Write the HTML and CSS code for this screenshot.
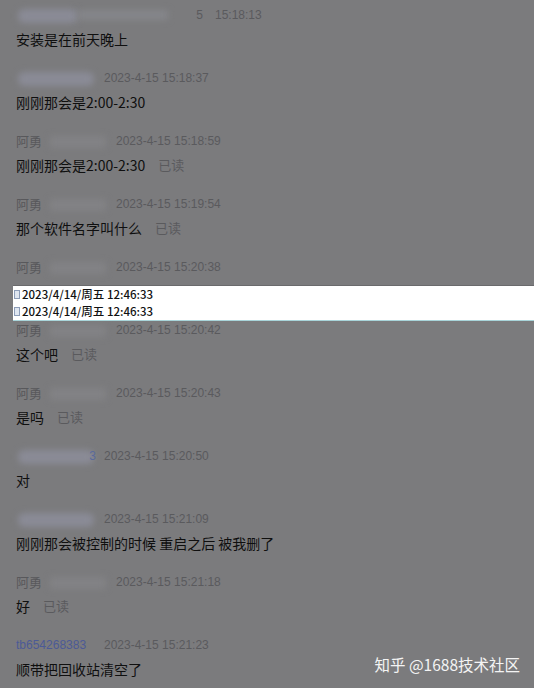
FILE: index.html
```html
<!DOCTYPE html>
<html lang="zh-CN">
<head>
<meta charset="utf-8">
<link rel="stylesheet" href="styles.css">
</head>
<body>
<div class="chat">
  <div class="msg">
    <div class="head"><span class="name smudge s-wide"><i class="blur b1"></i><i class="blur b2"></i><span class="tail">5</span></span><span class="time">15:18:13</span></div>
    <div class="body">安装是在前天晚上</div>
  </div>
  <div class="msg">
    <div class="head"><span class="name smudge"><i class="blur b1"></i></span><span class="time">2023-4-15 15:18:37</span></div>
    <div class="body">刚刚那会是2:00-2:30</div>
  </div>
  <div class="msg">
    <div class="head"><span class="name ayong">阿勇<i class="blur b3"></i></span><span class="time">2023-4-15 15:18:59</span></div>
    <div class="body">刚刚那会是2:00-2:30<span class="read">已读</span></div>
  </div>
  <div class="msg">
    <div class="head"><span class="name ayong">阿勇<i class="blur b3"></i></span><span class="time">2023-4-15 15:19:54</span></div>
    <div class="body">那个软件名字叫什么<span class="read">已读</span></div>
  </div>
  <div class="msg msg-band">
    <div class="head"><span class="name ayong">阿勇<i class="blur b3"></i></span><span class="time">2023-4-15 15:20:38</span></div>
    <div class="band">
      <div class="band-line"><span class="ico"></span>2023/4/14/周五 12:46:33</div>
      <div class="band-line"><span class="ico"></span>2023/4/14/周五 12:46:33</div>
    </div>
  </div>
  <div class="msg">
    <div class="head"><span class="name ayong">阿勇<i class="blur b3"></i></span><span class="time">2023-4-15 15:20:42</span></div>
    <div class="body">这个吧<span class="read">已读</span></div>
  </div>
  <div class="msg">
    <div class="head"><span class="name ayong">阿勇<i class="blur b3"></i></span><span class="time">2023-4-15 15:20:43</span></div>
    <div class="body">是吗<span class="read">已读</span></div>
  </div>
  <div class="msg">
    <div class="head"><span class="name smudge blue"><i class="blur b1"></i><span class="tail">3</span></span><span class="time">2023-4-15 15:20:50</span></div>
    <div class="body">对</div>
  </div>
  <div class="msg">
    <div class="head"><span class="name smudge"><i class="blur b1"></i></span><span class="time">2023-4-15 15:21:09</span></div>
    <div class="body">刚刚那会被控制的时候 重启之后 被我删了</div>
  </div>
  <div class="msg">
    <div class="head"><span class="name ayong">阿勇<i class="blur b3"></i></span><span class="time">2023-4-15 15:21:18</span></div>
    <div class="body">好<span class="read">已读</span></div>
  </div>
  <div class="msg">
    <div class="head"><span class="name tb">tb654268383</span><span class="time">2023-4-15 15:21:23</span></div>
    <div class="body">顺带把回收站清空了</div>
  </div>
</div>
<div class="watermark">知乎 @1688技术社区</div>
</body>
</html>
```
FILE: styles.css
```css
html, body {
  margin: 0;
  padding: 0;
  background: #7b7b7d;
  width: 534px;
  height: 688px;
  overflow: hidden;
}
body {
  position: relative;
  font-family: "Liberation Sans", "Noto Sans CJK SC", sans-serif;
}
.chat {
  padding: 4px 0 0 16px;
  display: flex;
  flex-direction: column;
}
.msg {
  height: 63px;
  display: flex;
  flex-direction: column;
}
.head {
  height: 22px;
  line-height: 22px;
  display: flex;
  align-items: center;
  gap: 12px;
  font-size: 12px;
  color: #5a5a5d;
}
.name {
  position: relative;
  height: 22px;
  display: flex;
  align-items: center;
  flex: none;
}
.smudge { width: 76px; }
.s-wide { width: 187px; }
.ayong {
  width: 88px;
  font-family: "Noto Sans CJK SC", sans-serif;
  font-size: 13px;
  color: #58585b;
}
.tb {
  color: #4c5a96;
  font-size: 12px;
  width: 76px;
}
.blur {
  position: absolute;
  display: block;
  filter: blur(3px);
}
.b1 {
  left: 2px;
  top: 5px;
  width: 76px;
  height: 14px;
  background: #8a8b96;
  border-radius: 6px;
}
.s-wide .b1 { width: 60px; }
.b2 {
  left: 62px;
  top: 6px;
  width: 90px;
  height: 10px;
  background: #85868a;
}
.b3 {
  left: 34px;
  top: 6px;
  width: 56px;
  height: 12px;
  background: #828285;
}
.tail {
  position: absolute;
  right: 0;
  color: #5a5a5d;
}
.blue .tail { color: #5a6a9c; right: -4px; }
.body {
  margin-top: 2px;
  height: 22px;
  line-height: 22px;
  font-family: "Noto Sans CJK SC", sans-serif;
  font-size: 14px;
  color: #0f0f0f;
  display: flex;
  white-space: nowrap;
}
.read {
  margin-left: 13px;
  color: #5a5a5d;
  font-size: 13px;
}
.band {
  margin: 7px 0 0 -3px;
  height: 35px;
  background: #ffffff;
  border-top: 1px solid #6a6a6c;
  border-bottom: 1px solid #a9d5da;
  padding: 0 0 0 1px;
  display: flex;
  flex-direction: column;
  justify-content: center;
  position: relative;
  z-index: 1;
}
.band-line {
  height: 17px;
  line-height: 17px;
  font-family: "Noto Sans CJK SC", sans-serif;
  font-size: 11.5px;
  font-weight: 500;
  color: #111111;
  display: flex;
  align-items: center;
  gap: 2px;
}
.ico {
  width: 6px;
  height: 9px;
  border: 1px solid #8d9db8;
  box-sizing: border-box;
  background: #dfe6f0;
}
.watermark {
  position: absolute;
  right: 14px;
  bottom: 13px;
  color: #f4f4f4;
  font-family: "Noto Sans CJK SC", sans-serif;
  font-size: 15.5px;
}
```
